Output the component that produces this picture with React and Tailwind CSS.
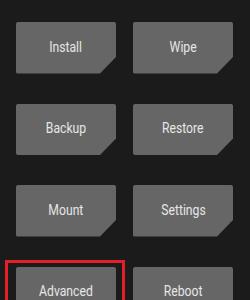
import React from "react";

const buttons = ["Install", "Wipe", "Backup", "Restore", "Mount", "Settings", "Advanced", "Reboot"];

const TileButton = ({ label, selected }) => {
  return (
    <div className="relative h-[51.5px] w-[100px]">
      {selected && (
        <div className="absolute -left-[11px] -top-[7px] -right-[9px] h-[60px] border-[3px] border-[#e3202a]" />
      )}
      <div className="relative flex h-full w-full items-center justify-center rounded-[2px] bg-[#666666] [clip-path:polygon(0_0,100%_0,100%_68%,84%_100%,0_100%)]">
        <span className="inline-block scale-x-[0.84] text-[14.5px] text-[#e6e6e6]">{label}</span>
      </div>
    </div>
  );
};

const App = () => {
  return (
    <div
      className="h-[300px] w-[250px] overflow-hidden bg-[#1b1b1b]"
      style={{ fontFamily: "Roboto, 'Liberation Sans', sans-serif" }}
    >
      <div className="grid grid-cols-[100px_100px] gap-x-[17px] gap-y-[30px] pl-4 pt-[22px]">
        {buttons.map((b) => (
          <TileButton key={b} label={b} selected={b === "Advanced"} />
        ))}
      </div>
    </div>
  );
};

export default App;
